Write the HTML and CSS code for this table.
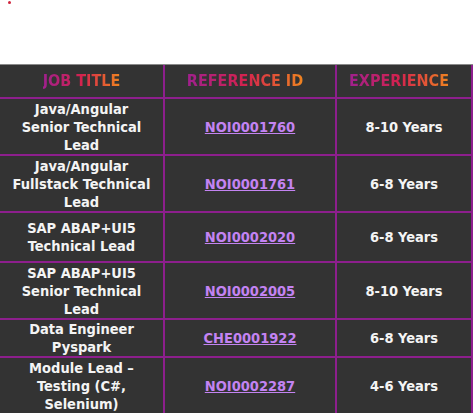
FILE: index.html
```html
<!DOCTYPE html>
<html lang="en">
<head>
<meta charset="utf-8">
<title>Jobs</title>
<link rel="stylesheet" href="styles.css">
</head>
<body>
<div class="top"><span class="dot"></span></div>
<table class="jobs">
  <thead>
    <tr>
      <th class="c1"><span class="grad">JOB TITLE</span></th>
      <th class="c2"><span class="grad">REFERENCE ID</span></th>
      <th class="c3"><span class="grad">EXPERIENCE</span></th>
    </tr>
  </thead>
  <tbody>
    <tr class="r3">
      <td>Java/Angular<br>Senior Technical<br>Lead</td>
      <td><a href="#">NOI0001760</a></td>
      <td>8-10 Years</td>
    </tr>
    <tr class="r3">
      <td>Java/Angular<br>Fullstack Technical<br>Lead</td>
      <td><a href="#">NOI0001761</a></td>
      <td>6-8 Years</td>
    </tr>
    <tr class="r2tall">
      <td>SAP ABAP+UI5<br>Technical Lead</td>
      <td><a href="#">NOI0002020</a></td>
      <td>6-8 Years</td>
    </tr>
    <tr class="r3">
      <td>SAP ABAP+UI5<br>Senior Technical<br>Lead</td>
      <td><a href="#">NOI0002005</a></td>
      <td>8-10 Years</td>
    </tr>
    <tr class="r2">
      <td>Data Engineer<br>Pyspark</td>
      <td><a href="#">CHE0001922</a></td>
      <td>6-8 Years</td>
    </tr>
    <tr class="r3">
      <td>Module Lead –<br>Testing (C#,<br>Selenium)</td>
      <td><a href="#">NOI0002287</a></td>
      <td>4-6 Years</td>
    </tr>
  </tbody>
</table>
</body>
</html>
```
FILE: styles.css
```css
html, body {
  margin: 0;
  padding: 0;
  background: #ffffff;
}
body {
  font-family: "DejaVu Sans Condensed", "DejaVu Sans", Verdana, sans-serif;
  font-stretch: condensed;
}
.top {
  height: 64px;
  position: relative;
}
.dot {
  position: absolute;
  left: 8px;
  top: 1px;
  width: 3px;
  height: 3px;
  border-radius: 50%;
  background: #d0243c;
}
.jobs {
  border-collapse: separate;
  border-spacing: 0;
  background: #333333;
  border-top: 1px solid #8a8a8a;
  width: 473px;
  table-layout: fixed;
}
.jobs th, .jobs td {
  border-right: 2px solid #8d1f8d;
  border-bottom: 2px solid #8d1f8d;
  text-align: center;
  vertical-align: middle;
  padding: 0;
  color: #f4f4f4;
  font-weight: bold;
}
.jobs th {
  height: 32px;
  font-size: 16px;
  line-height: 18px;
}
.jobs th.c1 { width: 163px; }
.jobs th.c2 { width: 160px; padding-right: 10px; }
.jobs th.c3 { width: 124px; padding-right: 10px; }
.grad {
  background: linear-gradient(90deg, #a0208e 0%, #d4224e 50%, #f08420 100%);
  -webkit-background-clip: text;
  background-clip: text;
  color: transparent;
}
.jobs td {
  font-size: 14.5px;
  line-height: 18px;
}
.r3 td { height: 55px; }
.r2tall td { height: 48px; }
.r2 td { height: 36px; }
.jobs a {
  color: #c383f2;
  text-decoration: underline;
}
```
